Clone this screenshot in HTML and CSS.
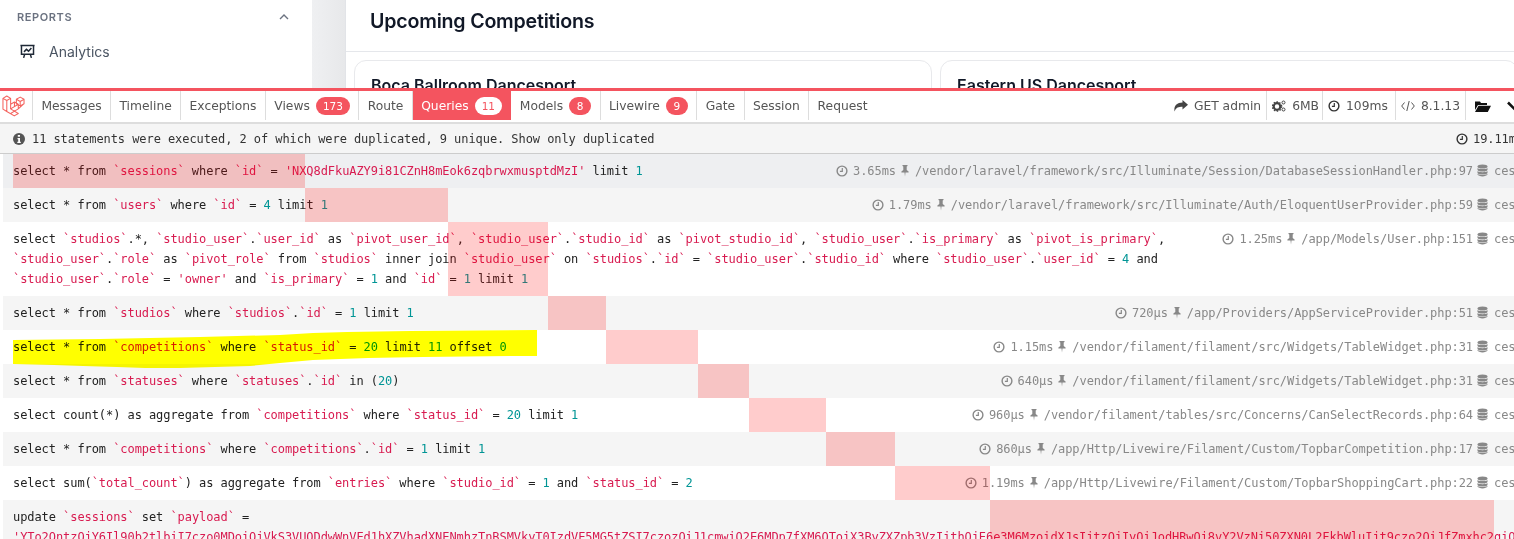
FILE: index.html
```html
<!DOCTYPE html>
<html lang="en">
<head>
<meta charset="utf-8">
<title>Upcoming Competitions</title>
<link rel="stylesheet" href="styles.css">
</head>
<body>
<svg class="defs" width="0" height="0" aria-hidden="true">
  <symbol id="i-clock" viewBox="0 0 12 12"><circle cx="6" cy="6" r="4.9" fill="none" stroke="currentColor" stroke-width="1.4"/><path d="M6.3 3v3.4H3.9" fill="none" stroke="currentColor" stroke-width="1.2"/></symbol>
  <symbol id="i-pin" viewBox="0 0 10 12"><path d="M2.500 .5h5v1l-.8.5v3.400L8.600 7v1H5.500l-.5 4-.5-4H1.400V7l1.900-1.600V2l-.8-.5z" fill="currentColor"/></symbol>
  <symbol id="i-db" viewBox="0 0 11 12"><ellipse cx="5.500" cy="2" rx="5" ry="2" fill="currentColor"/><path d="M.5 3.400c1 1.600 9 1.600 10 0v2c-1 2-9 2-10 0zM.5 6.500c1 1.600 9 1.600 10 0v2c-1 2-9 2-10 0zM.5 9.300c1 1.600 9 1.600 10 0v.8c-1 2.400-9 2.400-10 0z" fill="currentColor"/></symbol>
</svg>

<section class="app">
  <aside class="sidebar">
    <div class="group-head"><span class="group-title">REPORTS</span>
      <svg class="chev" viewBox="0 0 10 6"><path d="M1 5l4-4 4 4" fill="none" stroke="currentColor" stroke-width="1.400"/></svg>
    </div>
    <div class="nav-item">
      <svg class="nav-icon" viewBox="0 0 24 24" fill="none" stroke="currentColor" stroke-width="2.100"><path d="M2 3.500h20M3.500 3.500v12.500h17V3.500M8 16l-1.500 5M16 16l1.500 5M7 12.500l3.500-3.500 3 2.500 4-4.500"/></svg>
      <span>Analytics</span>
    </div>
  </aside>
  <div class="gutter"></div>
  <main class="content">
    <h1 class="page-title">Upcoming Competitions</h1>
    <div class="cards">
      <article class="card">Boca Ballroom Dancesport</article>
      <article class="card">Eastern US Dancesport</article>
    </div>
  </main>
</section>

<section class="debugbar">
  <nav class="tabs">
    <div class="logo">
      <svg viewBox="0 0 24 25" fill="none" stroke="#f4645f" stroke-width="1.100" stroke-linejoin="round"><path d="M1 4.500l4-2.500 4 2.500v11l8 4.800-4.200 2.500L5 18.300 1 15.800zM1 4.500l4 2.300 4-2.300M5 6.800v11.500M5 18.300l8 4.500M9 15.500l8-4.800v4.800l-8 4.800M17 10.700l-4-2.400-4 2.300M13 8.300V13M15 5.500l4-2.300 4 2.300v4.600l-4 2.300-4-2.300zM15 5.500l4 2.300 4-2.300M19 7.800v4.600M17 15.500l6-5.400"/></svg>
    </div>
    <a class="tab">Messages</a>
    <a class="tab">Timeline</a>
    <a class="tab">Exceptions</a>
    <a class="tab">Views <b class="badge">173</b></a>
    <a class="tab">Route</a>
    <a class="tab active">Queries <b class="badge">11</b></a>
    <a class="tab">Models <b class="badge">8</b></a>
    <a class="tab">Livewire <b class="badge">9</b></a>
    <a class="tab">Gate</a>
    <a class="tab">Session</a>
    <a class="tab plain">Request</a>
    <div class="indicators">
      <span class="ind"><svg class="ic-share" viewBox="0 0 14 12"><path d="M8.500 0L14 4.700 8.500 9.400V6.700C4.500 6.700 2 7.300.5 11.500-.3 6 2.500 2.800 8.500 2.600z" fill="#444"/></svg>GET admin</span>
      <span class="ind tight"><svg class="ic-cog" viewBox="0 0 14 12"><circle cx="5" cy="6.500" r="3.300" fill="none" stroke="#444" stroke-width="2.200"/><circle cx="5" cy="6.500" r="4.700" fill="none" stroke="#444" stroke-width="1.200" stroke-dasharray="1.500 1.500"/><circle cx="11.500" cy="2.500" r="1.500" fill="none" stroke="#444"/><circle cx="11.500" cy="9.500" r="1.500" fill="none" stroke="#444"/></svg>6MB</span>
      <span class="ind wide"><svg class="ic-12 dark"><use href="#i-clock"/></svg>109ms</span>
      <span class="ind"><svg class="ic-code" viewBox="0 0 14 10"><path d="M3.500 1.500L.7 5l2.800 3.500M10.500 1.500L13.300 5l-2.800 3.500M8.200 0L5.800 10" fill="none" stroke="#555" stroke-width="1"/></svg>8.1.13</span>
      <span class="ind last">
        <svg class="ic-folder" viewBox="0 0 16 12"><path d="M0 1.500h5l1 1.500h6v2H3L0 10zM3.500 5.800H16L12.800 12H0z" fill="#111"/></svg>
        <svg class="ic-down" viewBox="0 0 14 10"><path d="M1 1.500L7 7.500l6-6" fill="none" stroke="#111" stroke-width="2.600"/></svg>
      </span>
    </div>
  </nav>

  <div class="status">
    <svg class="ic-info" viewBox="0 0 12 12"><circle cx="6" cy="6" r="6" fill="#555"/><path d="M4.800 2h2.200v1.800H4.800zM4.500 5h2.500v3.800h.8V10H4.300V8.800h.9V6.200h-.7z" fill="#fff"/></svg>
    <span>11 statements were executed, 2 of which were duplicated, 9 unique. Show only duplicated</span>
    <span class="status-time"><svg class="ic-12 dark"><use href="#i-clock"/></svg>19.11ms</span>
  </div>

  <div class="list">
    <div class="row hover">
      <div class="sql">select * from <i>`sessions`</i> where <i>`id`</i> = <i>'NXQ8dFkuAZY9i81CZnH8mEok6zqbrwxmusptdMzI'</i> limit <u>1</u></div>
      <div class="meta"><svg class="ic-12"><use href="#i-clock"/></svg>3.65ms<svg class="ic-pin"><use href="#i-pin"/></svg>/vendor/laravel/framework/src/Illuminate/Session/DatabaseSessionHandler.php:97<svg class="ic-db"><use href="#i-db"/></svg>ces</div>
      <div class="bar" style="left:10px;width:292px"></div>
    </div>
    <div class="row">
      <div class="sql">select * from <i>`users`</i> where <i>`id`</i> = <u>4</u> limit <u>1</u></div>
      <div class="meta"><svg class="ic-12"><use href="#i-clock"/></svg>1.79ms<svg class="ic-pin"><use href="#i-pin"/></svg>/vendor/laravel/framework/src/Illuminate/Auth/EloquentUserProvider.php:59<svg class="ic-db"><use href="#i-db"/></svg>ces</div>
      <div class="bar" style="left:302px;width:143px"></div>
    </div>
    <div class="row">
      <div class="sql">select <i>`studios`</i>.*, <i>`studio_user`</i>.<i>`user_id`</i> as <i>`pivot_user_id`</i>, <i>`studio_user`</i>.<i>`studio_id`</i> as <i>`pivot_studio_id`</i>, <i>`studio_user`</i>.<i>`is_primary`</i> as <i>`pivot_is_primary`</i>,<br><i>`studio_user`</i>.<i>`role`</i> as <i>`pivot_role`</i> from <i>`studios`</i> inner join <i>`studio_user`</i> on <i>`studios`</i>.<i>`id`</i> = <i>`studio_user`</i>.<i>`studio_id`</i> where <i>`studio_user`</i>.<i>`user_id`</i> = <u>4</u> and<br><i>`studio_user`</i>.<i>`role`</i> = <i>'owner'</i> and <i>`is_primary`</i> = <u>1</u> and <i>`id`</i> = <u>1</u> limit <u>1</u></div>
      <div class="meta"><svg class="ic-12"><use href="#i-clock"/></svg>1.25ms<svg class="ic-pin"><use href="#i-pin"/></svg>/app/Models/User.php:151<svg class="ic-db"><use href="#i-db"/></svg>ces</div>
      <div class="bar" style="left:445px;width:100px"></div>
    </div>
    <div class="row">
      <div class="sql">select * from <i>`studios`</i> where <i>`studios`</i>.<i>`id`</i> = <u>1</u> limit <u>1</u></div>
      <div class="meta"><svg class="ic-12"><use href="#i-clock"/></svg>720μs<svg class="ic-pin"><use href="#i-pin"/></svg>/app/Providers/AppServiceProvider.php:51<svg class="ic-db"><use href="#i-db"/></svg>ces</div>
      <div class="bar" style="left:545px;width:58px"></div>
    </div>
    <div class="row">
      <div class="sql">select * from <i>`competitions`</i> where <i>`status_id`</i> = <u>20</u> limit <u>11</u> offset <u>0</u></div>
      <div class="meta"><svg class="ic-12"><use href="#i-clock"/></svg>1.15ms<svg class="ic-pin"><use href="#i-pin"/></svg>/vendor/filament/filament/src/Widgets/TableWidget.php:31<svg class="ic-db"><use href="#i-db"/></svg>ces</div>
      <div class="bar" style="left:603px;width:92px"></div>
    </div>
    <div class="row">
      <div class="sql">select * from <i>`statuses`</i> where <i>`statuses`</i>.<i>`id`</i> in (<u>20</u>)</div>
      <div class="meta"><svg class="ic-12"><use href="#i-clock"/></svg>640μs<svg class="ic-pin"><use href="#i-pin"/></svg>/vendor/filament/filament/src/Widgets/TableWidget.php:31<svg class="ic-db"><use href="#i-db"/></svg>ces</div>
      <div class="bar" style="left:695px;width:51px"></div>
    </div>
    <div class="row">
      <div class="sql">select count(*) as aggregate from <i>`competitions`</i> where <i>`status_id`</i> = <u>20</u> limit <u>1</u></div>
      <div class="meta"><svg class="ic-12"><use href="#i-clock"/></svg>960μs<svg class="ic-pin"><use href="#i-pin"/></svg>/vendor/filament/tables/src/Concerns/CanSelectRecords.php:64<svg class="ic-db"><use href="#i-db"/></svg>ces</div>
      <div class="bar" style="left:746px;width:77px"></div>
    </div>
    <div class="row">
      <div class="sql">select * from <i>`competitions`</i> where <i>`competitions`</i>.<i>`id`</i> = <u>1</u> limit <u>1</u></div>
      <div class="meta"><svg class="ic-12"><use href="#i-clock"/></svg>860μs<svg class="ic-pin"><use href="#i-pin"/></svg>/app/Http/Livewire/Filament/Custom/TopbarCompetition.php:17<svg class="ic-db"><use href="#i-db"/></svg>ces</div>
      <div class="bar" style="left:823px;width:69px"></div>
    </div>
    <div class="row">
      <div class="sql">select sum(<i>`total_count`</i>) as aggregate from <i>`entries`</i> where <i>`studio_id`</i> = <u>1</u> and <i>`status_id`</i> = <u>2</u></div>
      <div class="meta"><svg class="ic-12"><use href="#i-clock"/></svg>1.19ms<svg class="ic-pin"><use href="#i-pin"/></svg>/app/Http/Livewire/Filament/Custom/TopbarShoppingCart.php:22<svg class="ic-db"><use href="#i-db"/></svg>ces</div>
      <div class="bar" style="left:892px;width:95px"></div>
    </div>
    <div class="row">
      <div class="sql">update <i>`sessions`</i> set <i>`payload`</i> =<br><i>'YTo2OntzOjY6Il90b2tlbiI7czo0MDoiOjVkS3VUODdwWnVEd1hXZVhadXNENmhzTnBSMVkyT0IzdVE5MG5tZSI7czozOiJ1cmwiO2E6MDp7fXM6OToiX3ByZXZpb3VzIjthOjE6e3M6MzoidXJsIjtzOjIyOiJodHRwOi8vY2VzNi50ZXN0L2FkbWluIjt9czo2OiJfZmxhc2giO</i></div>
      <div class="bar" style="left:987px;width:504px"></div>
    </div>
  </div>
</section>

<svg class="marker" viewBox="0 0 1514 539" aria-hidden="true"><polygon fill="#ffff00" points="13,340 100,339 200,337 280,335 313,333 347,332 410,331 537,330 537,356 510,356 423,357 368,358 313,360 280,363 250,366 180,368 145,368 117,367 83,366 54,365 13,364"/></svg>
</body>
</html>
```

FILE: styles.css
```css
* { box-sizing: border-box; }
html, body { margin: 0; height: 539px; overflow: hidden; background: #fff; }
.defs { position: absolute; }

.app { display: flex; height: 88px; overflow: hidden; font-family: Inter, "Open Sans", sans-serif; }
.sidebar { width: 312px; background: #fff; padding: 10px 22px 0 17px; color: #4b5563; }
.group-head { display: flex; align-items: center; justify-content: space-between; height: 13px; }
.group-title { font-size: 11px; font-weight: 600; letter-spacing: .6px; color: #6b7280; }
.chev { width: 10px; height: 6px; color: #6b7280; margin-right: 1px; }
.nav-item { display: flex; align-items: center; gap: 13px; margin-top: 18px; font-size: 14px; color: #4b5563; height: 20px; padding-left: 2px; }
.nav-icon { width: 17px; height: 17px; color: #1f2937; }
.gutter { width: 33px; background: linear-gradient(90deg, #eff0f2, #e7e8ea); }
.content { flex: 1; background: #fff; border-left: 1px solid #e2e4e8; min-width: 0; }
.page-title { margin: 0; height: 52px; padding: 9px 0 0 24px; font-size: 19.600px; line-height: 24px; font-weight: 600; color: #111827; letter-spacing: -.2px; border-bottom: 1px solid #e5e7eb; }
.cards { display: flex; gap: 8px; padding: 8px 0 0 8px; }
.card { width: 578px; height: 80px; border: 1px solid #e8e9ec; border-radius: 12px; padding: 14px 16px; font-size: 16px; line-height: 20px; font-weight: 600; color: #111827; flex-shrink: 0; }

.debugbar { border-top: 3px solid #f4545f; font-family: "DejaVu Sans", sans-serif; }
.tabs { display: flex; height: 33px; align-items: stretch; background: #fff; border-bottom: 2px solid #ddd; overflow: hidden; }
.logo { width: 33px; padding: 3px 0 0 2px; border-right: 1px solid #ddd; margin-bottom: 2px; flex-shrink: 0; }
.logo svg { width: 23px; height: 24px; display: block; }
.tab { display: flex; align-items: center; gap: 6px; padding: 0 8.400px; font-size: 12.300px; color: #555; border-right: 1px solid #ddd; margin-bottom: 2px; white-space: nowrap; }
.tab.plain { border-right: 0; }
.tab.active { background: #f4545f; color: #fff; border-right-color: transparent; }
.badge { display: inline-block; min-width: 22px; height: 18px; padding: 0 7px; font-size: 10.500px; font-weight: 400; line-height: 18px; text-align: center; border-radius: 9px; background: #f4545f; color: #fff; }
.active .badge { background: #fff; color: #f4545f; }
.indicators { margin-left: auto; display: flex; align-items: stretch; margin-right: -12px; }
.ind { display: flex; align-items: center; gap: 6px; padding: 0 5px; font-size: 12.300px; color: #555; border-right: 1px solid #ddd; margin-bottom: 2px; white-space: nowrap; }
.ind.tight { padding-right: 3px; }
.ind.wide { padding-right: 7px; }
.ind.last { border-right: 0; gap: 16px; padding: 0 0 0 9px; width: 60px; }
.ic-share { width: 14px; height: 12px; }
.ic-cog { width: 14px; height: 12px; }
.ic-code { width: 14px; height: 10px; }
.ic-folder { width: 16px; height: 12px; flex-shrink: 0; }
.ic-down { width: 14px; height: 10px; flex-shrink: 0; }

.status { display: flex; align-items: center; gap: 7px; height: 30px; padding: 0 0 0 13px; background: #f5f5f5; border-bottom: 1px solid #ccc; font: 12px/20px "DejaVu Sans Mono", monospace; letter-spacing: -.07px; color: #333; white-space: nowrap; overflow: hidden; }
.ic-info { width: 12px; height: 12px; flex-shrink: 0; }
.status-time { margin-left: auto; display: flex; align-items: center; gap: 5px; margin-right: -39px; color: #333; width: 97px; }

.list { padding-left: 3px; font: 12px/20px "DejaVu Sans Mono", monospace; letter-spacing: -.07px; }
.row { position: relative; display: flex; justify-content: space-between; padding: 7px 0 7px 10px; color: #222; }
.row:nth-child(odd) { background: #fff; }
.row:nth-child(even) { background: #f5f5f5; }
.row.hover { background: #eeeff1; }
.sql { white-space: nowrap; }
.sql i { font-style: normal; color: #d81b50; }
.sql u { text-decoration: none; color: #009595; }
.meta { display: flex; align-items: flex-start; white-space: nowrap; color: #888; flex-shrink: 0; margin-right: -1.500px; }
.ic-12 { width: 12px; height: 12px; margin: 4px 5px 0 0; color: #888; flex-shrink: 0; }
.ic-12.dark { color: #333; margin: 0; }
.ic-pin { width: 10px; height: 13px; margin: 3px 5px 0 4px; color: #888; flex-shrink: 0; }
.ic-db { width: 11px; height: 13px; margin: 3px 6px 0 4px; color: #888; flex-shrink: 0; }
.bar { position: absolute; top: 0; bottom: 0; background: rgba(255, 0, 0, .2); }

.marker { position: absolute; left: 0; top: 0; width: 1514px; height: 539px; mix-blend-mode: multiply; pointer-events: none; }
```
